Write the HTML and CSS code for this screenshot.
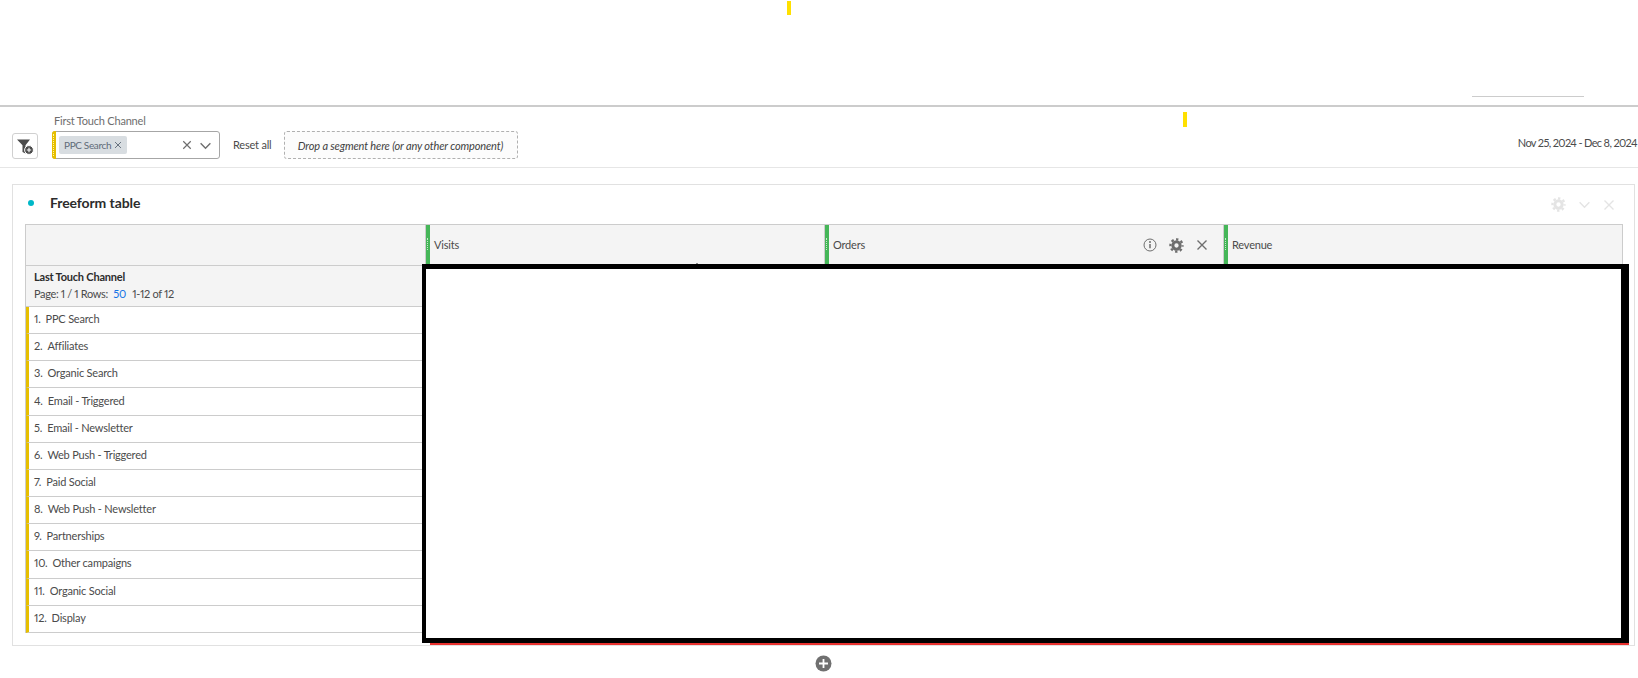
FILE: index.html
```html
<!DOCTYPE html>
<html lang="en">
<head>
<meta charset="utf-8">
<title>Freeform table</title>
<link rel="stylesheet" href="styles.css">
</head>
<body>
<svg class="defs" width="0" height="0" aria-hidden="true">
  <symbol id="gear" viewBox="0 0 16 16">
    <circle cx="8" cy="8" r="3.9" fill="none" stroke="currentColor" stroke-width="3.2"/>
    <circle cx="8" cy="8" r="6.5" fill="none" stroke="currentColor" stroke-width="2.4" stroke-dasharray="2.55 2.55" stroke-dashoffset="1.27"/>
  </symbol>
  <symbol id="close" viewBox="0 0 12 12">
    <path d="M1.5 1.5l9 9M10.5 1.5l-9 9" fill="none" stroke="currentColor" stroke-width="1.4"/>
  </symbol>
  <symbol id="chev" viewBox="0 0 12 12">
    <path d="M1.5 4l4.5 4.5L10.5 4" fill="none" stroke="currentColor" stroke-width="1.3"/>
  </symbol>
</svg>

<div class="top-space">
  <span class="top-rule"></span>
  <span class="mark mark-a"></span>
  <span class="mark mark-b"></span>
</div>

<div class="filter-bar">
  <button class="funnel-btn" type="button">
    <svg width="18" height="18" viewBox="0 0 18 18">
      <path d="M1 2.5h13L9.5 8.2V16.5L6.5 15V8.2z" fill="#4b4b4b"/>
      <circle cx="13" cy="13" r="4.4" fill="#4b4b4b" stroke="#fff" stroke-width="1"/>
      <path d="M10.8 13h4.4M13 10.8v4.4" stroke="#fff" stroke-width="1.1"/>
    </svg>
  </button>
  <div class="field">
    <label class="field-label">First Touch Channel</label>
    <div class="combo">
      <span class="combo-grip"></span>
      <span class="chip">PPC Search <svg class="chip-x" width="8" height="8"><use href="#close"/></svg></span>
      <svg class="combo-x" width="10" height="10"><use href="#close"/></svg>
      <svg class="combo-chev" width="13" height="13"><use href="#chev"/></svg>
    </div>
  </div>
  <span class="reset">Reset all</span>
  <div class="dropzone">Drop a segment here (or any other component)</div>
  <span class="date">Nov 25, 2024 - Dec 8, 2024</span>
</div>

<section class="panel">
  <header class="panel-head">
    <span class="dot"></span>
    <h2 class="panel-title">Freeform table</h2>
    <span class="panel-tools">
      <svg width="15" height="15"><use href="#gear"/></svg>
      <svg width="13" height="13"><use href="#chev"/></svg>
      <svg width="12" height="12"><use href="#close"/></svg>
    </span>
  </header>

  <div class="table">
    <div class="head-row">
      <div class="head-blank"></div>
      <div class="metric"><span class="metric-bar"></span><span class="metric-name">Visits</span></div>
      <div class="metric"><span class="metric-bar"></span><span class="metric-name">Orders</span>
        <span class="metric-tools">
          <svg width="14" height="14" viewBox="0 0 14 14"><circle cx="7" cy="7" r="6" fill="none" stroke="#6e6e6e" stroke-width="1"/><path d="M7 6v4.2" stroke="#6e6e6e" stroke-width="1.5"/><circle cx="7" cy="4" r="1" fill="#6e6e6e"/></svg>
          <svg width="15" height="15"><use href="#gear"/></svg>
          <svg width="12" height="12"><use href="#close"/></svg>
        </span>
      </div>
      <div class="metric"><span class="metric-bar"></span><span class="metric-name">Revenue</span></div>
    </div>
    <div class="dim-head">
      <strong class="dim-name">Last Touch Channel</strong>
      <span class="dim-page">Page: 1 / 1 Rows: <a class="dim-rows">50</a> 1-12 of 12</span>
    </div>
    <div class="row"><span class="num">1.</span><span>PPC Search</span></div>
    <div class="row"><span class="num">2.</span><span>Affiliates</span></div>
    <div class="row"><span class="num">3.</span><span>Organic Search</span></div>
    <div class="row"><span class="num">4.</span><span>Email - Triggered</span></div>
    <div class="row"><span class="num">5.</span><span>Email - Newsletter</span></div>
    <div class="row"><span class="num">6.</span><span>Web Push - Triggered</span></div>
    <div class="row"><span class="num">7.</span><span>Paid Social</span></div>
    <div class="row"><span class="num">8.</span><span>Web Push - Newsletter</span></div>
    <div class="row"><span class="num">9.</span><span>Partnerships</span></div>
    <div class="row"><span class="num">10.</span><span>Other campaigns</span></div>
    <div class="row"><span class="num">11.</span><span>Organic Social</span></div>
    <div class="row"><span class="num">12.</span><span>Display</span></div>
  </div>
  <div class="redaction"><span class="redaction-tick"></span><span class="redaction-red"></span></div>
</section>

<div class="add-row">
  <svg width="17" height="17" viewBox="0 0 17 17"><circle cx="8.5" cy="8.5" r="8" fill="#707070"/><path d="M4 8.5h9M8.5 4v9" stroke="#fff" stroke-width="1.8"/></svg>
</div>
</body>
</html>
```

FILE: styles.css
```css
* { box-sizing: border-box; }
html, body { margin: 0; padding: 0; }
body {
  width: 1638px;
  height: 678px;
  overflow: hidden;
  background: #fff;
  color: #4b4b4b;
  font-family: "Lato", "Noto Sans", sans-serif;
  font-size: 11px;
  letter-spacing: -0.2px;
  font-variant-numeric: proportional-nums;
  position: relative;
}
.defs { position: absolute; }
svg { display: block; flex: none; }

.top-space { height: 105px; position: relative; }
.top-rule { position: absolute; left: 1472px; top: 96px; width: 112px; height: 1px; background: #ccc; }
.mark { position: absolute; width: 4px; height: 15px; background: #ffe000; }
.mark-a { left: 787px; top: 1px; height: 14px; }
.mark-b { left: 1183px; top: 112px; }

.filter-bar {
  height: 63px;
  border-top: 2px solid #ccc;
  border-bottom: 1px solid #e6e6e6;
  display: flex;
  align-items: flex-end;
  padding: 0 1px 8px 12px;
  position: relative;
}
.funnel-btn {
  width: 26px;
  height: 26px;
  padding: 0;
  background: #fff;
  border: 1px solid #d0d0d0;
  border-radius: 3px;
  display: flex;
  align-items: center;
  justify-content: center;
}
.field { margin-left: 14px; width: 168px; display: flex; flex-direction: column; }
.field-label { font-size: 11px; color: #6e6e6e; padding-left: 2px; margin-bottom: 2px; line-height: 16px; }
.combo {
  height: 28px;
  border: 1px solid #a6a6a6;
  border-radius: 3px;
  display: flex;
  align-items: center;
  position: relative;
  padding-left: 6px;
  color: #6e6e6e;
}
.combo-grip {
  position: absolute;
  left: -1px;
  top: -1px;
  bottom: -1px;
  width: 4px;
  background: #e6bf00;
  border-radius: 3px 0 0 3px;
}
.combo-grip::after {
  content: "";
  position: absolute;
  left: 1px;
  top: 3px;
  bottom: 3px;
  border-left: 1px dotted #fff3a8;
}
.chip {
  height: 18px;
  width: 68px;
  background: #d8dde1;
  border-radius: 2px;
  font-size: 10px;
  letter-spacing: -0.35px;
  color: #5f6b78;
  display: flex;
  align-items: center;
  gap: 3px;
  padding-left: 5px;
  white-space: nowrap;
}
.combo-x { margin-left: auto; color: #6e6e6e; }
.combo-chev { margin: 0 7px 0 7px; color: #6e6e6e; }
.reset { margin-left: 13px; margin-bottom: 6px; font-size: 11px; color: #4b4b4b; line-height: 16px; }
.dropzone {
  margin-left: 12px;
  width: 234px;
  height: 28px;
  border: 1px dashed #b0b0b0;
  border-radius: 3px;
  background: #fcfcfc;
  font-style: italic;
  font-size: 11px;
  letter-spacing: -0.14px;
  display: flex;
  align-items: center;
  justify-content: center;
  color: #3f3f3f;
}
.date { margin-left: auto; margin-bottom: 8px; font-size: 11px; letter-spacing: -0.65px; line-height: 16px; }

.panel {
  position: relative;
  margin: 16px 3px 0 12px;
  height: 462px;
  border: 1px solid #e1e1e1;
  padding: 0 11px 0 12px;
}
.panel-head { height: 39px; display: flex; align-items: center; padding: 0 0 4px 3px; }
.dot { width: 6px; height: 6px; border-radius: 50%; background: #00b8c8; }
.panel-title { margin: 0 0 0 16px; font-size: 14px; font-weight: 700; color: #2c2c2c; letter-spacing: -0.1px; }
.panel-tools { margin-left: auto; display: flex; align-items: center; gap: 12px; padding-right: 8px; margin-top: 4px; color: #e4e4e4; }

.table { border: 1px solid #ccc; border-bottom: 0; }
.head-row {
  display: grid;
  grid-template-columns: repeat(4, 399px);
  height: 41px;
  background: #f4f4f4;
  border-bottom: 1px solid #ccc;
}
.metric { position: relative; display: flex; align-items: center; padding-left: 8px; font-size: 11px; border-left: 1px solid #ccc; }
.metric-bar { position: absolute; left: 0; top: 0; bottom: 0; width: 4px; background: #45b658; }
.metric-bar::after {
  content: "";
  position: absolute;
  left: 1px;
  top: 13px;
  height: 12px;
  border-left: 1px dotted #c7e8cd;
}
.metric-name { padding-bottom: 2px; color: #4b4b4b; }
.metric-tools { margin-left: auto; display: flex; align-items: center; gap: 12px; padding-right: 15px; color: #6e6e6e; }
.dim-head {
  height: 41px;
  background: #f4f4f4;
  border-bottom: 1px solid #ccc;
  padding: 3px 8px 0;
  display: flex;
  flex-direction: column;
  gap: 1px;
  line-height: 16px;
}
.dim-name { font-weight: 700; color: #2c2c2c; font-size: 11px; }
.dim-page { font-size: 11px; letter-spacing: -0.35px; }
.dim-rows { color: #1473e6; margin: 0 4px 0 3px; }
.row {
  height: 27.17px;
  border-bottom: 1px solid #ccc;
  border-left: 3px solid #e6bf00;
  padding: 0 0 3px 5px;
  display: flex;
  align-items: center;
  font-size: 11px;
}
.row .num { margin-right: 5px; }

.redaction {
  position: absolute;
  left: 409px;
  top: 79px;
  width: 1207px;
  height: 379px;
  background: #fff;
  border: solid #000;
  border-width: 5px 8px 5px 4px;
}
.redaction-tick { position: absolute; left: 270px; top: -6px; width: 2px; height: 1px; background: #8a8a8a; }
.redaction-red { position: absolute; left: 4px; right: -8px; bottom: -7px; height: 2px; background: #e8312f; }

.add-row { display: flex; justify-content: center; padding: 9px 0 0 9px; }
```
